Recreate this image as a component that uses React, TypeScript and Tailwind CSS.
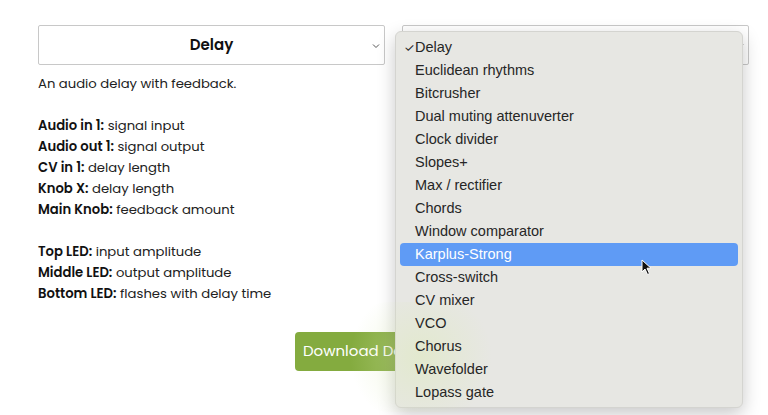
import React from 'react'

const options = [
  'Delay',
  'Euclidean rhythms',
  'Bitcrusher',
  'Dual muting attenuverter',
  'Clock divider',
  'Slopes+',
  'Max / rectifier',
  'Chords',
  'Window comparator',
  'Karplus-Strong',
  'Cross-switch',
  'CV mixer',
  'VCO',
  'Chorus',
  'Wavefolder',
  'Lopass gate',
]

const ports: [string, string][] = [
  ['Audio in 1:', 'signal input'],
  ['Audio out 1:', 'signal output'],
  ['CV in 1:', 'delay length'],
  ['Knob X:', 'delay length'],
  ['Main Knob:', 'feedback amount'],
]

const leds: [string, string][] = [
  ['Top LED:', 'input amplitude'],
  ['Middle LED:', 'output amplitude'],
  ['Bottom LED:', 'flashes with delay time'],
]

function Chevron() {
  return (
    <svg width="8" height="6" viewBox="0 0 8 6" className="absolute right-[4px] top-[17px]">
      <path d="M1 1.5 L4 4.5 L7 1.5" fill="none" stroke="#555" strokeWidth="1" />
    </svg>
  )
}

function Cursor() {
  return (
    <svg width="12" height="18" viewBox="0 0 12 18" className="absolute left-[641px] top-[259px]">
      <path d="M1 1 L1 13 L4 10 L6.5 15.5 L8.5 14.6 L6 9.2 L10 9.2 Z" fill="#111" stroke="#fff" strokeWidth="1" />
    </svg>
  )
}

function Lines({ rows }: { rows: [string, string][] }) {
  return (
    <div className="mt-[21px]">
      {rows.map(([k, v]) => (
        <p key={k}>
          <span className="font-semibold text-[#111]">{k}</span> {v}
        </p>
      ))}
    </div>
  )
}

export default function App() {
  return (
    <div className="relative w-[768px] h-[415px] overflow-hidden bg-white font-['Poppins','Lato',sans-serif] text-[#222]">
      {/* Selects */}
      <div className="flex gap-[17px] pl-[38px] pt-[25px]">
        <div className="relative w-[347px] h-[40px] border border-[#c8c8c8] rounded-[2px] flex items-center justify-center font-semibold text-[15px] text-[#111]">
          Delay
          <Chevron />
        </div>
        <div className="relative w-[347px] h-[40px] border border-[#c8c8c8] rounded-[2px]">
          <Chevron />
        </div>
      </div>

      {/* Description */}
      <div className="pl-[38px] pt-[8px] text-[13.2px] leading-[21px]">
        <p>An audio delay with feedback.</p>
        <Lines rows={ports} />
        <Lines rows={leds} />
      </div>

      <div className="pl-[295px] pt-[28px]">
        <button className="h-[39px] px-[8px] rounded-[4px] bg-[#84ab3f] text-white text-[15px] whitespace-nowrap">
          Download Delay
        </button>
      </div>

      {/* Open dropdown menu */}
      <div className="absolute left-[395px] top-[31px] w-[348px] h-[377px] rounded-[6px] bg-[#e7e7e3] border border-[#d4d4d0] shadow-[0_6px_18px_rgba(0,0,0,0.22)] px-[4px] pt-[4px] font-['Liberation_Sans','Inter',sans-serif] text-[14.5px] text-[#262626]">
        <div className="absolute left-[-60px] top-[270px] w-[170px] h-[110px] rounded-full bg-[radial-gradient(circle,rgba(220,235,180,0.45),rgba(231,231,227,0)_70%)]" />
        {options.map((o, i) => (
          <div
            key={o}
            className={
              'relative h-[23px] flex items-center pl-[15px] rounded-[4px] ' +
              (o === 'Karplus-Strong' ? 'bg-[#5f9bf5] text-white' : '')
            }
          >
            {i === 0 && <span className="absolute left-[4px] text-[12px]">✓</span>}
            {o}
          </div>
        ))}
      </div>

      <Cursor />
    </div>
  )
}
